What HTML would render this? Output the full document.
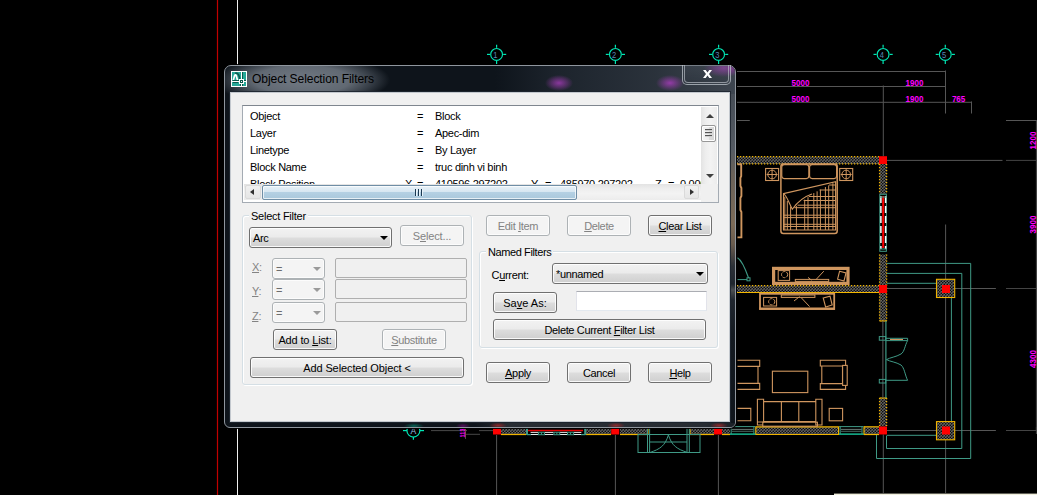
<!DOCTYPE html>
<html>
<head>
<meta charset="utf-8">
<title>Object Selection Filters</title>
<style>
html,body{margin:0;padding:0;background:#000;}
body{width:1037px;height:495px;position:relative;overflow:hidden;font-family:"Liberation Sans",sans-serif;font-size:11px;color:#000;}
#cad{position:absolute;left:0;top:0;width:1037px;height:495px;}
#dlg{position:absolute;left:224px;top:65px;width:512px;height:363px;border-radius:7px 7px 6px 6px;background:#0e141b;box-sizing:border-box;border:1px solid #8f969e;box-shadow:0 0 0 1px rgba(0,0,0,.9);overflow:hidden;}
#glass{position:absolute;left:0;top:0;width:510px;height:361px;background-repeat:no-repeat;
background-image:
 radial-gradient(ellipse 14px 8px at 334px 17px, rgba(165,60,185,.8), rgba(160,60,180,.35) 60%, rgba(160,60,180,0) 100%),
 radial-gradient(ellipse 14px 8px at 445px 17px, rgba(165,60,185,.85), rgba(160,60,180,.35) 60%, rgba(160,60,180,0) 100%),
 radial-gradient(ellipse 20px 9px at 499px 2px, rgba(165,70,185,.9), rgba(160,60,180,.4) 60%, rgba(160,60,180,0) 100%),
 radial-gradient(ellipse 88px 26px at 77px 14px, rgba(116,124,134,.97) 0%, rgba(106,114,124,.9) 55%, rgba(80,88,98,.6) 80%, rgba(40,48,58,0) 100%),
 linear-gradient(90deg, rgba(0,0,0,0) 270px, rgba(40,48,58,.55) 330px, rgba(52,60,70,.75) 430px, rgba(64,72,82,.95) 510px),
 linear-gradient(180deg, #464d56 0, #555b63 55px, #6a6259 80px, #7c6b58 130px, #6a5c4e 150px, #2c3138 172px, #20262e 190px, #4c4f52 196px, #20262e 206px, #141a21 240px, #0f151c 100%);
background-size:510px 28px,510px 28px,510px 28px,510px 28px,510px 28px,7px 333px;
background-position:0 0,0 0,0 0,0 0,0 0,503px 28px;
}
#client{position:absolute;left:231px;top:93px;width:498px;height:328px;background:#f0f0f0;box-shadow:0 0 0 1px #c3c8ce, 0 0 0 2px rgba(30,38,48,.9);}
.abs{position:absolute;white-space:nowrap;}
.t{position:absolute;white-space:nowrap;line-height:13px;height:13px;letter-spacing:-0.3px;}
u{text-decoration:underline;text-underline-offset:1px;}
.btn{position:absolute;box-sizing:border-box;height:21px;border:1px solid #707070;border-radius:3px;
 background:linear-gradient(#f2f2f2 0%,#ebebeb 48%,#dddddd 52%,#cfcfcf 100%);box-shadow:inset 0 0 0 1px rgba(255,255,255,.85);
 text-align:center;line-height:19px;padding-top:1px;white-space:nowrap;letter-spacing:-0.35px;}
.btn.dis{border-color:#adb2b5;background:#f4f4f4;color:#838383;box-shadow:inset 0 0 0 1px #fcfcfc;}
.grp{position:absolute;box-sizing:border-box;border:1px solid #d5dfe5;border-radius:3px;box-shadow:inset 1px 1px 0 #fff, 1px 1px 0 #fff;}
.grp>span{position:absolute;top:-7px;left:6px;background:#f0f0f0;padding:0 2px;line-height:13px;letter-spacing:-0.4px;}
.edit{position:absolute;box-sizing:border-box;height:20px;border:1px solid #afafaf;border-radius:2px;background:#f0f0f0;}
.cmbd{position:absolute;box-sizing:border-box;height:21px;width:53px;border:1px solid #adb2b5;border-radius:3px;background:#f4f4f4;box-shadow:inset 0 0 0 1px #fcfcfc;color:#6d6d6d;}
.arr{position:absolute;width:0;height:0;border-left:4px solid transparent;border-right:4px solid transparent;border-top:4px solid #000;}
</style>
</head>
<body>
<svg id="cad" width="1037" height="495" viewBox="0 0 1037 495">
<!--CAD-->
<defs>
<pattern id="hat" width="3" height="3" patternUnits="userSpaceOnUse"><rect width="3" height="3" fill="#646464"/><circle cx="0.75" cy="0.75" r="0.82" fill="#0c0c0c"/><circle cx="2.25" cy="2.25" r="0.82" fill="#0c0c0c"/></pattern>
</defs>
<rect x="217" y="0" width="1" height="495" fill="#f00000"/><rect x="216.7" y="0" width="1.6" height="495" fill="#900000" opacity=".5"/>
<line x1="237.5" y1="0" x2="237.5" y2="65" stroke="#f0f0f0" stroke-width="1" />
<line x1="237.5" y1="428" x2="237.5" y2="495" stroke="#f0f0f0" stroke-width="1" />
<circle cx="496.6" cy="54.4" r="5.9" fill="none" stroke="#00e6b4" stroke-width="1.15"/>
<line x1="487.0" y1="54.4" x2="490.0" y2="54.4" stroke="#00e6b4" stroke-width="1.2" />
<line x1="503.20000000000005" y1="54.4" x2="506.20000000000005" y2="54.4" stroke="#00e6b4" stroke-width="1.2" />
<line x1="496.6" y1="44.8" x2="496.6" y2="47.8" stroke="#00e6b4" stroke-width="1.2" />
<line x1="496.6" y1="61.0" x2="496.6" y2="64.0" stroke="#00e6b4" stroke-width="1.2" />
<text x="495.3" y="58.0" font-family="Liberation Sans, sans-serif" font-size="9.8" fill="#5a88b8" text-anchor="middle" textLength="4.2" lengthAdjust="spacingAndGlyphs">1</text>
<circle cx="615.4" cy="54.4" r="5.9" fill="none" stroke="#00e6b4" stroke-width="1.15"/>
<line x1="605.8" y1="54.4" x2="608.8" y2="54.4" stroke="#00e6b4" stroke-width="1.2" />
<line x1="622.0" y1="54.4" x2="625.0" y2="54.4" stroke="#00e6b4" stroke-width="1.2" />
<line x1="615.4" y1="44.8" x2="615.4" y2="47.8" stroke="#00e6b4" stroke-width="1.2" />
<line x1="615.4" y1="61.0" x2="615.4" y2="64.0" stroke="#00e6b4" stroke-width="1.2" />
<text x="614.1" y="58.0" font-family="Liberation Sans, sans-serif" font-size="9.8" fill="#5a88b8" text-anchor="middle" textLength="4.2" lengthAdjust="spacingAndGlyphs">2</text>
<circle cx="718.6" cy="54.4" r="5.9" fill="none" stroke="#00e6b4" stroke-width="1.15"/>
<line x1="709.0" y1="54.4" x2="712.0" y2="54.4" stroke="#00e6b4" stroke-width="1.2" />
<line x1="725.2" y1="54.4" x2="728.2" y2="54.4" stroke="#00e6b4" stroke-width="1.2" />
<line x1="718.6" y1="44.8" x2="718.6" y2="47.8" stroke="#00e6b4" stroke-width="1.2" />
<line x1="718.6" y1="61.0" x2="718.6" y2="64.0" stroke="#00e6b4" stroke-width="1.2" />
<text x="717.3000000000001" y="58.0" font-family="Liberation Sans, sans-serif" font-size="9.8" fill="#5a88b8" text-anchor="middle" textLength="4.2" lengthAdjust="spacingAndGlyphs">3</text>
<circle cx="883.1" cy="54.4" r="5.9" fill="none" stroke="#00e6b4" stroke-width="1.15"/>
<line x1="873.5" y1="54.4" x2="876.5" y2="54.4" stroke="#00e6b4" stroke-width="1.2" />
<line x1="889.7" y1="54.4" x2="892.7" y2="54.4" stroke="#00e6b4" stroke-width="1.2" />
<line x1="883.1" y1="44.8" x2="883.1" y2="47.8" stroke="#00e6b4" stroke-width="1.2" />
<line x1="883.1" y1="61.0" x2="883.1" y2="64.0" stroke="#00e6b4" stroke-width="1.2" />
<text x="881.8000000000001" y="58.0" font-family="Liberation Sans, sans-serif" font-size="9.8" fill="#5a88b8" text-anchor="middle" textLength="4.2" lengthAdjust="spacingAndGlyphs">4</text>
<circle cx="945.3" cy="54.4" r="5.9" fill="none" stroke="#00e6b4" stroke-width="1.15"/>
<line x1="935.6999999999999" y1="54.4" x2="938.6999999999999" y2="54.4" stroke="#00e6b4" stroke-width="1.2" />
<line x1="951.9" y1="54.4" x2="954.9" y2="54.4" stroke="#00e6b4" stroke-width="1.2" />
<line x1="945.3" y1="44.8" x2="945.3" y2="47.8" stroke="#00e6b4" stroke-width="1.2" />
<line x1="945.3" y1="61.0" x2="945.3" y2="64.0" stroke="#00e6b4" stroke-width="1.2" />
<text x="944.0" y="58.0" font-family="Liberation Sans, sans-serif" font-size="9.8" fill="#5a88b8" text-anchor="middle" textLength="4.2" lengthAdjust="spacingAndGlyphs">5</text>
<line x1="737" y1="71.5" x2="945.8" y2="71.5" stroke="#565656" stroke-width="1" />
<line x1="737" y1="86.5" x2="945.8" y2="86.5" stroke="#565656" stroke-width="1" />
<line x1="737" y1="102.3" x2="972" y2="102.3" stroke="#565656" stroke-width="1" />
<line x1="945.5" y1="70.5" x2="945.5" y2="113.5" stroke="#565656" stroke-width="1" />
<line x1="971.5" y1="101.5" x2="971.5" y2="113.5" stroke="#565656" stroke-width="1" />
<line x1="883.3" y1="85.5" x2="883.3" y2="156" stroke="#565656" stroke-width="1" />
<text x="800.5" y="86" font-family="Liberation Sans, sans-serif" font-size="9.6" font-weight="bold" fill="#ff00ff" text-anchor="middle" textLength="17.8" lengthAdjust="spacingAndGlyphs">5000</text>
<text x="800.5" y="102" font-family="Liberation Sans, sans-serif" font-size="9.6" font-weight="bold" fill="#ff00ff" text-anchor="middle" textLength="17.8" lengthAdjust="spacingAndGlyphs">5000</text>
<text x="914.5" y="86" font-family="Liberation Sans, sans-serif" font-size="9.6" font-weight="bold" fill="#ff00ff" text-anchor="middle" textLength="17.8" lengthAdjust="spacingAndGlyphs">1900</text>
<text x="914.5" y="102" font-family="Liberation Sans, sans-serif" font-size="9.6" font-weight="bold" fill="#ff00ff" text-anchor="middle" textLength="17.8" lengthAdjust="spacingAndGlyphs">1900</text>
<text x="958.6" y="102" font-family="Liberation Sans, sans-serif" font-size="9.6" font-weight="bold" fill="#ff00ff" text-anchor="middle" textLength="13.350000000000001" lengthAdjust="spacingAndGlyphs">765</text>
<line x1="737" y1="120.5" x2="749.8" y2="120.5" stroke="#565656" stroke-width="1" />
<line x1="1006" y1="120.5" x2="1037" y2="120.5" stroke="#565656" stroke-width="1" />
<line x1="1036.4" y1="120" x2="1036.4" y2="431" stroke="#4a4a4a" stroke-width="1" />
<line x1="887" y1="160.4" x2="1002.5" y2="160.4" stroke="#565656" stroke-width="1" />
<line x1="1006" y1="160.4" x2="1037" y2="160.4" stroke="#444" stroke-width="1" />
<line x1="887" y1="288.5" x2="995.9" y2="288.5" stroke="#565656" stroke-width="1" />
<line x1="1006" y1="288.5" x2="1037" y2="288.5" stroke="#444" stroke-width="1" />
<line x1="887" y1="430.5" x2="995.9" y2="430.5" stroke="#565656" stroke-width="1" />
<line x1="1006" y1="430.5" x2="1037" y2="430.5" stroke="#444" stroke-width="1" />
<line x1="1036.4" y1="427" x2="1036.4" y2="434" stroke="#4a4a4a" stroke-width="1" />
<text transform="translate(1036,140.5) rotate(-90)" font-family="Liberation Sans, sans-serif" font-size="9.6" font-weight="bold" fill="#ff00ff" text-anchor="middle" textLength="17.8" lengthAdjust="spacingAndGlyphs">1200</text>
<text transform="translate(1036,224.5) rotate(-90)" font-family="Liberation Sans, sans-serif" font-size="9.6" font-weight="bold" fill="#ff00ff" text-anchor="middle" textLength="17.8" lengthAdjust="spacingAndGlyphs">3900</text>
<text transform="translate(1036,359) rotate(-90)" font-family="Liberation Sans, sans-serif" font-size="9.6" font-weight="bold" fill="#ff00ff" text-anchor="middle" textLength="17.8" lengthAdjust="spacingAndGlyphs">4300</text>
<line x1="945.6" y1="224.5" x2="945.6" y2="493" stroke="#565656" stroke-width="1" />
<line x1="883.3" y1="434.5" x2="883.3" y2="493" stroke="#565656" stroke-width="1" />
<rect x="737" y="156.5" width="142" height="7.5" fill="url(#hat)"/>
<line x1="737" y1="156.6" x2="879" y2="156.6" stroke="#f0b400" stroke-width="1.3" stroke-dasharray="1.3 1.7"/>
<line x1="737" y1="163.8" x2="879" y2="163.8" stroke="#f0b400" stroke-width="1.3" stroke-dasharray="1.3 1.7"/>
<rect x="879" y="156.2" width="8" height="8" fill="#ff0000"/>
<rect x="879.5" y="164" width="7" height="30" fill="url(#hat)"/>
<line x1="879.6" y1="164" x2="879.6" y2="194" stroke="#f0b400" stroke-width="1.3" stroke-dasharray="1.3 1.7"/>
<line x1="886.6" y1="164" x2="886.6" y2="194" stroke="#f0b400" stroke-width="1.3" stroke-dasharray="1.3 1.7"/>
<rect x="879.8" y="194.3" width="6.6" height="57" fill="none" stroke="#3f9a86" stroke-width="1" />
<line x1="883.2" y1="196" x2="883.2" y2="248" stroke="#ff0000" stroke-width="2" />
<line x1="880.9" y1="196" x2="880.9" y2="249" stroke="#ffffff" stroke-width="1.5" stroke-dasharray="7 3"/>
<line x1="885.6" y1="196" x2="885.6" y2="249" stroke="#ffffff" stroke-width="1.5" stroke-dasharray="7 3"/>
<line x1="879.8" y1="197" x2="886.4" y2="197" stroke="#3f9a86" stroke-width="1" />
<line x1="879.8" y1="249" x2="886.4" y2="249" stroke="#3f9a86" stroke-width="1" />
<rect x="879.5" y="254.5" width="7" height="66.5" fill="url(#hat)"/>
<line x1="879.6" y1="254.5" x2="879.6" y2="321" stroke="#f0b400" stroke-width="1.3" stroke-dasharray="1.3 1.7"/>
<line x1="886.6" y1="254.5" x2="886.6" y2="321" stroke="#f0b400" stroke-width="1.3" stroke-dasharray="1.3 1.7"/>
<line x1="879.5" y1="321" x2="887" y2="321" stroke="#f0b400" stroke-width="1.2" />
<rect x="737" y="285.5" width="142" height="7" fill="url(#hat)"/>
<line x1="737" y1="285.6" x2="879" y2="285.6" stroke="#f0b400" stroke-width="1.3" stroke-dasharray="1.3 1.7"/>
<line x1="737" y1="292.5" x2="879" y2="292.5" stroke="#f5b800" stroke-width="1.2" />
<rect x="879" y="285" width="8" height="8" fill="#ff0000"/>
<rect x="879.5" y="398" width="7" height="28.5" fill="url(#hat)"/>
<line x1="879.6" y1="398" x2="879.6" y2="426" stroke="#f0b400" stroke-width="1.3" stroke-dasharray="1.3 1.7"/>
<line x1="886.6" y1="398" x2="886.6" y2="426" stroke="#f0b400" stroke-width="1.3" stroke-dasharray="1.3 1.7"/>
<line x1="879.5" y1="398" x2="887" y2="398" stroke="#f0b400" stroke-width="1.2" />
<rect x="501" y="427" width="25" height="7.5" fill="url(#hat)"/>
<line x1="501" y1="434.5" x2="526" y2="434.5" stroke="#f0b400" stroke-width="1.2" />
<rect x="586" y="427" width="25" height="7.5" fill="url(#hat)"/>
<line x1="586" y1="434.5" x2="611" y2="434.5" stroke="#f0b400" stroke-width="1.2" />
<rect x="620" y="427" width="28" height="7.5" fill="url(#hat)"/>
<line x1="620" y1="434.5" x2="648" y2="434.5" stroke="#f0b400" stroke-width="1.2" />
<rect x="690" y="427" width="24" height="7.5" fill="url(#hat)"/>
<line x1="690" y1="434.5" x2="714" y2="434.5" stroke="#f0b400" stroke-width="1.2" />
<rect x="722" y="427" width="8" height="7.5" fill="url(#hat)"/>
<line x1="722" y1="434.5" x2="730" y2="434.5" stroke="#f0b400" stroke-width="1.2" />
<rect x="755.8" y="427" width="82.80000000000007" height="7.5" fill="url(#hat)"/>
<line x1="755.8" y1="434.5" x2="838.6" y2="434.5" stroke="#f0b400" stroke-width="1.2" />
<line x1="755.8" y1="426.8" x2="838.6" y2="426.8" stroke="#f0b400" stroke-width="1.2" />
<rect x="864" y="427" width="15" height="7.5" fill="url(#hat)"/>
<line x1="864" y1="434.5" x2="879" y2="434.5" stroke="#f0b400" stroke-width="1.2" />
<line x1="864" y1="426.8" x2="879" y2="426.8" stroke="#f0b400" stroke-width="1.2" />
<line x1="755.8" y1="426.5" x2="755.8" y2="435" stroke="#f0b400" stroke-width="1.2" />
<line x1="838.6" y1="426.5" x2="838.6" y2="435" stroke="#f0b400" stroke-width="1.2" />
<line x1="864" y1="426.5" x2="864" y2="435" stroke="#f0b400" stroke-width="1.2" />
<line x1="648" y1="427" x2="648" y2="435" stroke="#f0b400" stroke-width="1.2" />
<line x1="690" y1="427" x2="690" y2="435" stroke="#f0b400" stroke-width="1.2" />
<rect x="493" y="426.5" width="8" height="8" fill="#ff0000"/>
<rect x="611.2" y="426.5" width="8" height="8" fill="#ff0000"/>
<rect x="714" y="426.5" width="8" height="8" fill="#ff0000"/>
<rect x="879" y="426.5" width="8" height="8" fill="#ff0000"/>
<line x1="496.6" y1="435" x2="496.6" y2="495" stroke="#565656" stroke-width="1" />
<line x1="615.4" y1="435" x2="615.4" y2="495" stroke="#565656" stroke-width="1" />
<line x1="718.4" y1="435" x2="718.4" y2="495" stroke="#565656" stroke-width="1" />
<line x1="527" y1="427" x2="527" y2="435" stroke="#3f9a86" stroke-width="2" />
<line x1="585.2" y1="427" x2="585.2" y2="435" stroke="#3f9a86" stroke-width="2" />
<line x1="528" y1="430.6" x2="583" y2="430.6" stroke="#e60000" stroke-width="1.5" />
<line x1="530.6" y1="432.4" x2="538" y2="432.4" stroke="#e8e8e8" stroke-width="1" />
<line x1="530.6" y1="434.5" x2="538" y2="434.5" stroke="#e8e8e8" stroke-width="1" />
<line x1="545" y1="432.4" x2="553.5" y2="432.4" stroke="#e8e8e8" stroke-width="1" />
<line x1="545" y1="434.5" x2="553.5" y2="434.5" stroke="#e8e8e8" stroke-width="1" />
<line x1="559.7" y1="432.4" x2="567" y2="432.4" stroke="#e8e8e8" stroke-width="1" />
<line x1="559.7" y1="434.5" x2="567" y2="434.5" stroke="#e8e8e8" stroke-width="1" />
<line x1="574" y1="432.4" x2="581.4" y2="432.4" stroke="#e8e8e8" stroke-width="1" />
<line x1="574" y1="434.5" x2="581.4" y2="434.5" stroke="#e8e8e8" stroke-width="1" />
<rect x="538.4" y="432.3" width="6.100000000000023" height="2.4" fill="none" stroke="#3f9a86" stroke-width="1" />
<line x1="541.45" y1="432.3" x2="541.45" y2="434.7" stroke="#3f9a86" stroke-width="1" />
<rect x="554" y="432.3" width="5.7000000000000455" height="2.4" fill="none" stroke="#3f9a86" stroke-width="1" />
<line x1="556.85" y1="432.3" x2="556.85" y2="434.7" stroke="#3f9a86" stroke-width="1" />
<rect x="567.5" y="432.3" width="6.100000000000023" height="2.4" fill="none" stroke="#3f9a86" stroke-width="1" />
<line x1="570.55" y1="432.3" x2="570.55" y2="434.7" stroke="#3f9a86" stroke-width="1" />
<line x1="527" y1="434.6" x2="531" y2="434.6" stroke="#3f9a86" stroke-width="1.2" />
<line x1="581" y1="434.6" x2="585.5" y2="434.6" stroke="#3f9a86" stroke-width="1.2" />
<line x1="730" y1="426.6" x2="755.5" y2="426.6" stroke="#3f9a86" stroke-width="1" />
<line x1="732" y1="429.4" x2="753.5" y2="429.4" stroke="#6a7a76" stroke-width="1" />
<line x1="732" y1="431.3" x2="753.5" y2="431.3" stroke="#4a6a62" stroke-width="1" />
<line x1="730" y1="434.1" x2="755.5" y2="434.1" stroke="#19d6a8" stroke-width="1.3" />
<line x1="731.2" y1="426.6" x2="731.2" y2="434" stroke="#3f9a86" stroke-width="1" />
<line x1="753.9" y1="426.6" x2="753.9" y2="434" stroke="#3f9a86" stroke-width="1" />
<line x1="839" y1="426.6" x2="863.6" y2="426.6" stroke="#3f9a86" stroke-width="1" />
<line x1="841" y1="429.4" x2="861.6" y2="429.4" stroke="#6a7a76" stroke-width="1" />
<line x1="841" y1="431.3" x2="861.6" y2="431.3" stroke="#4a6a62" stroke-width="1" />
<line x1="839" y1="434.1" x2="863.6" y2="434.1" stroke="#19d6a8" stroke-width="1.3" />
<line x1="840.2" y1="426.6" x2="840.2" y2="434" stroke="#3f9a86" stroke-width="1" />
<line x1="862.0" y1="426.6" x2="862.0" y2="434" stroke="#3f9a86" stroke-width="1" />
<rect x="638" y="434.5" width="62" height="18" fill="none" stroke="#3f9a86" stroke-width="1" />
<line x1="647.5" y1="428" x2="647.5" y2="453" stroke="#3f9a86" stroke-width="1" />
<line x1="649.6" y1="428" x2="649.6" y2="453" stroke="#3f9a86" stroke-width="1" />
<line x1="687" y1="428" x2="687" y2="453" stroke="#3f9a86" stroke-width="1" />
<line x1="689.3" y1="428" x2="689.3" y2="453" stroke="#3f9a86" stroke-width="1" />
<line x1="649.6" y1="442" x2="687" y2="442" stroke="#3f9a86" stroke-width="1" />
<path d="M650 452.5 C660 449 665 446 668.4 435 C672 446 677 449 687.5 452.5" fill="none" stroke="#3f9a86" stroke-width="1"/>
<circle cx="413.4" cy="430.6" r="6.5" fill="none" stroke="#00e6b4" stroke-width="1.2"/>
<line x1="403" y1="430.6" x2="407" y2="430.6" stroke="#00e6b4" stroke-width="1.2" />
<line x1="420" y1="430.6" x2="424" y2="430.6" stroke="#00e6b4" stroke-width="1.2" />
<line x1="413.4" y1="437" x2="413.4" y2="439.8" stroke="#00e6b4" stroke-width="1.2" />
<text x="413.4" y="434" font-family="Liberation Sans, sans-serif" font-size="8.5" fill="#9cc0e8" text-anchor="middle">A</text>
<line x1="431" y1="430.6" x2="467" y2="430.6" stroke="#484848" stroke-width="1" />
<line x1="479" y1="430.6" x2="493" y2="430.6" stroke="#484848" stroke-width="1" />
<line x1="464.6" y1="434.3" x2="480" y2="434.3" stroke="#484848" stroke-width="1" />
<line x1="465.5" y1="429" x2="465.5" y2="439" stroke="#484848" stroke-width="1" />
<text transform="translate(465,437.5) rotate(-90)" font-family="Liberation Sans, sans-serif" font-size="7" font-weight="bold" fill="#ff00ff" textLength="9" lengthAdjust="spacingAndGlyphs">113</text>
<path d="M887 263.4 H970.7 V458.5 H876.5 V435" fill="none" stroke="#3f9a86" stroke-width="1"/>
<path d="M887 273.4 H961.8 V448.5 H886.5 V435.5" fill="none" stroke="#3f9a86" stroke-width="1"/>
<line x1="887" y1="283.3" x2="936.5" y2="283.3" stroke="#3f9a86" stroke-width="1" />
<line x1="951.4" y1="297.7" x2="951.4" y2="421" stroke="#3f9a86" stroke-width="1" />
<line x1="887" y1="435.3" x2="936" y2="435.3" stroke="#3f9a86" stroke-width="1" />
<rect x="936.5" y="279.3" width="18" height="18" fill="url(#hat)"/>
<rect x="936.5" y="279.3" width="18.2" height="18.2" fill="none" stroke="#f0b400" stroke-width="1.1" />
<rect x="936.5" y="421.6" width="18" height="18" fill="url(#hat)"/>
<rect x="936.5" y="421.6" width="18.2" height="18.2" fill="none" stroke="#f0b400" stroke-width="1.1" />
<rect x="942" y="285" width="8" height="8" fill="#ff0000"/>
<rect x="942" y="426.5" width="8" height="8" fill="#ff0000"/>
<line x1="885.9" y1="321" x2="885.9" y2="398" stroke="#3f9a86" stroke-width="1.2" />
<line x1="882.9" y1="321" x2="882.9" y2="398" stroke="#5c5c5c" stroke-width="1" />
<rect x="879.3" y="336.6" width="6.4" height="3.6" fill="none" stroke="#3f9a86" stroke-width="1" />
<rect x="879.3" y="379.4" width="6.4" height="3.6" fill="none" stroke="#3f9a86" stroke-width="1" />
<path d="M886 338.3 H907.6 V340.6 H886" fill="none" stroke="#3f9a86" stroke-width="1"/>
<line x1="890" y1="339.5" x2="903" y2="339.5" stroke="#cf965f" stroke-width="1" />
<path d="M907.6 340.6 C905 345 904.5 352 901 354 C896 357 890 357.5 886.5 359.6 C890 361.6 896 362 901 365 C904.5 368 905 375 907.6 380.3 H886" fill="none" stroke="#3f9a86" stroke-width="1"/>
<path d="M737.5 164.4 H741.2 V176 L740.4 178 V186 L741.4 188 V196 L740.4 198 V210 L741.4 212 V237.4 H737.5" fill="none" stroke="#cf965f" stroke-width="1.9"/>
<rect x="780.9" y="164" width="56.3" height="69.4" fill="none" stroke="#cf965f" stroke-width="1.5" rx="2.5"/>
<rect x="781.8" y="164.6" width="27" height="14" fill="none" stroke="#cf965f" stroke-width="1.1" rx="2.5"/>
<rect x="809.6" y="164.6" width="27" height="14" fill="none" stroke="#cf965f" stroke-width="1.1" rx="2.5"/>
<rect x="765.6" y="168.5" width="13" height="12" fill="none" stroke="#cf965f" stroke-width="1.1" />
<circle cx="772.1" cy="174.5" r="4.3" fill="none" stroke="#cf965f" stroke-width="1"/>
<line x1="766.6" y1="174.5" x2="777.6" y2="174.5" stroke="#cf965f" stroke-width="1" />
<line x1="772.1" y1="169.3" x2="772.1" y2="179.7" stroke="#cf965f" stroke-width="1" />
<rect x="839.7" y="168.5" width="13" height="12" fill="none" stroke="#cf965f" stroke-width="1.1" />
<circle cx="846.2" cy="174.5" r="4.3" fill="none" stroke="#cf965f" stroke-width="1"/>
<line x1="840.7" y1="174.5" x2="851.7" y2="174.5" stroke="#cf965f" stroke-width="1" />
<line x1="846.2" y1="169.3" x2="846.2" y2="179.7" stroke="#cf965f" stroke-width="1" />
<path d="M783.5 193.6 L835.6 181.6 V230 H783.5 Z" fill="none" stroke="#cf965f" stroke-width="1.1"/>
<path d="M783.5 193.6 C787 196 789 203 792.3 209.2 C796 204 803 197 812 194" fill="none" stroke="#cf965f" stroke-width="1.1"/>
<line x1="784.8" y1="196.70999999999992" x2="784.8" y2="230" stroke="#cf965f" stroke-width="1" />
<line x1="787.3" y1="200.95999999999992" x2="787.3" y2="230" stroke="#cf965f" stroke-width="1" />
<line x1="790.6" y1="206.57000000000005" x2="790.6" y2="230" stroke="#cf965f" stroke-width="1" />
<line x1="796.4" y1="206.04299999999998" x2="796.4" y2="230" stroke="#cf965f" stroke-width="1" />
<line x1="804.7" y1="199.65199999999993" x2="804.7" y2="230" stroke="#cf965f" stroke-width="1" />
<line x1="808" y1="197.11099999999996" x2="808" y2="230" stroke="#cf965f" stroke-width="1" />
<line x1="813.8" y1="193.06400000000002" x2="813.8" y2="230" stroke="#cf965f" stroke-width="1" />
<line x1="817.1" y1="191.34799999999998" x2="817.1" y2="230" stroke="#cf965f" stroke-width="1" />
<line x1="820.4" y1="189.632" x2="820.4" y2="230" stroke="#cf965f" stroke-width="1" />
<line x1="825.4" y1="187.032" x2="825.4" y2="230" stroke="#cf965f" stroke-width="1" />
<line x1="828.7" y1="185.31599999999997" x2="828.7" y2="230" stroke="#cf965f" stroke-width="1" />
<line x1="832.9" y1="183.132" x2="832.9" y2="230" stroke="#cf965f" stroke-width="1" />
<line x1="829.1" y1="185" x2="835.6" y2="185" stroke="#cf965f" stroke-width="1" />
<line x1="819.6" y1="190" x2="835.6" y2="190" stroke="#cf965f" stroke-width="1" />
<line x1="808.81" y1="196.5" x2="835.6" y2="196.5" stroke="#cf965f" stroke-width="1" />
<line x1="803.6099999999999" y1="200.5" x2="835.6" y2="200.5" stroke="#cf965f" stroke-width="1" />
<line x1="797.5" y1="205.2" x2="835.6" y2="205.2" stroke="#cf965f" stroke-width="1" />
<line x1="794.25" y1="207.7" x2="835.6" y2="207.7" stroke="#cf965f" stroke-width="1" />
<line x1="783.5" y1="215.2" x2="835.6" y2="215.2" stroke="#cf965f" stroke-width="1" />
<line x1="783.5" y1="217.6" x2="835.6" y2="217.6" stroke="#cf965f" stroke-width="1" />
<line x1="783.5" y1="224.3" x2="835.6" y2="224.3" stroke="#cf965f" stroke-width="1" />
<line x1="783.5" y1="226.5" x2="835.6" y2="226.5" stroke="#cf965f" stroke-width="1" />
<path d="M737.5 257.8 C740.5 259.5 745 268 748.6 278" fill="none" stroke="#3f9a86" stroke-width="1.1"/>
<line x1="737.5" y1="279.6" x2="747" y2="279.6" stroke="#3f9a86" stroke-width="1" />
<rect x="747" y="277.8" width="3" height="3" fill="none" stroke="#3f9a86" stroke-width="1" />
<rect x="773.6" y="268.4" width="74.4" height="15" fill="none" stroke="#cf965f" stroke-width="3.2" />
<line x1="773" y1="283.6" x2="848.6" y2="283.6" stroke="#cf965f" stroke-width="2.6" />
<rect x="778.2" y="270.6" width="11.4" height="9.8" fill="none" stroke="#cf965f" stroke-width="1" />
<circle cx="784.6" cy="274.6" r="3.1" fill="none" stroke="#cf965f" stroke-width="1" stroke-dasharray="3 1"/>
<rect x="795.3" y="279.4" width="33.4" height="2" fill="none" stroke="#cf965f" stroke-width="1" />
<path d="M808 277.4 L811.5 280.2 M815.6 280 L823.8 271.2" fill="none" stroke="#cf965f" stroke-width="1"/>
<path d="M839.6 271.2 L846 273 L844 281 L837.6 279.2 Z" fill="none" stroke="#cf965f" stroke-width="1.1"/>
<rect x="760" y="293.8" width="74.2" height="15.2" fill="none" stroke="#cf965f" stroke-width="1.8" />
<line x1="759.3" y1="308.6" x2="835" y2="308.6" stroke="#cf965f" stroke-width="2.4" />
<rect x="763.6" y="297.4" width="13" height="8.6" fill="none" stroke="#cf965f" stroke-width="1" />
<circle cx="771.7" cy="301.7" r="3.1" fill="none" stroke="#cf965f" stroke-width="1" stroke-dasharray="3 1"/>
<rect x="781.3" y="295" width="33.6" height="2.4" fill="none" stroke="#cf965f" stroke-width="1" />
<path d="M794 301 L799.6 296.6 M801.5 298 L809.6 306.6" fill="none" stroke="#cf965f" stroke-width="1"/>
<path d="M823.2 298 L830 296.2 L832.2 305 L825.6 307 Z" fill="none" stroke="#cf965f" stroke-width="1.1"/>
<path d="M737.5 360.2 H759.7 V366.4 H737.5 M737.5 383.4 H759.7 V389.4 H737.5 M758 366.4 V383.4" fill="none" stroke="#cf965f" stroke-width="1.1"/>
<rect x="772.4" y="371.2" width="35.4" height="21.4" fill="none" stroke="#cf965f" stroke-width="1.1" />
<path d="M820.3 360.2 H845.6 V366 H820.3 Z M820.3 383.6 H845.6 V389.4 H820.3 Z M821.8 366 V383.6 M842.5 366 V383.6" fill="none" stroke="#cf965f" stroke-width="1.1"/>
<rect x="842.6" y="365.4" width="4.6" height="20" fill="#000" stroke="#cf965f" stroke-width="1.1" />
<path d="M757.4 399.3 H763.6 V422 H757.4 Z M815.8 399.3 H822 V425 H815.8 Z M757.4 422 V425 H763 M763.6 401.6 H815.8 M781.4 401.6 V421.5 M798.8 401.6 V421.5 M763.6 421.5 H815.8" fill="none" stroke="#cf965f" stroke-width="1.1"/>
<rect x="762.8" y="422.2" width="54.6" height="4" fill="none" stroke="#cf965f" stroke-width="1.1" />
<path d="M737.5 408.4 H750.8 V420.8 H737.5" fill="none" stroke="#cf965f" stroke-width="1.1"/>
<rect x="829.2" y="408.4" width="13.4" height="12.4" fill="none" stroke="#cf965f" stroke-width="1.1" />
<rect x="834" y="493.6" width="203" height="1.4" fill="#efeedc"/>
<!--/CAD-->
</svg>

<div id="dlg"><div id="glass"></div><div style="position:absolute;left:0;top:357px;width:510px;height:5px;background:
 radial-gradient(ellipse 9px 3px at 273px 2.5px, rgba(210,40,40,.6), rgba(200,40,40,0) 100%),
 radial-gradient(ellipse 9px 3px at 391px 2.5px, rgba(210,40,40,.6), rgba(200,40,40,0) 100%),
 radial-gradient(ellipse 9px 3px at 494px 2.5px, rgba(210,40,40,.6), rgba(200,40,40,0) 100%),
 radial-gradient(ellipse 10px 3px at 189px 3px, rgba(0,200,160,.45), rgba(0,200,160,0) 100%),
 radial-gradient(ellipse 7px 3px at 238px 3px, rgba(220,0,220,.35), rgba(220,0,220,0) 100%),
 linear-gradient(90deg, rgba(70,74,80,0) 250px, rgba(70,74,80,.45) 285px, rgba(70,74,80,.45) 480px, rgba(70,74,80,.2) 510px);"></div></div>
<!-- title -->
<div class="abs" style="left:252px;top:71px;font-size:12.1px;line-height:16px;color:#000;letter-spacing:-0.1px;">Object Selection Filters</div>
<svg class="abs" style="left:231px;top:71px;" width="16" height="16" viewBox="0 0 16 16">
<rect x="0" y="0" width="16" height="16" fill="#fff"/>
<rect x="1" y="1" width="14" height="14" fill="#27a898"/>
<path d="M4.2 2.2 C7.5 1.5 8.6 5 8.8 9" fill="none" stroke="#0d5a4e" stroke-width="1.6"/>
<path d="M2.2 9.5 L3.6 4.6 Q4.4 3.2 5.2 4.6 L6.6 9.5" fill="none" stroke="#fff" stroke-width="1.7"/>
<rect x="1.5" y="9" width="6.5" height="1" fill="#0d5a4e"/>
<rect x="1" y="10" width="14" height="1" fill="#fff"/>
<rect x="10" y="1" width="1" height="14" fill="#fff"/>
<rect x="11" y="1" width="1" height="7" fill="#0d5a4e"/>
<rect x="11" y="12" width="1" height="3" fill="#0d5a4e"/>
<rect x="9" y="12" width="1" height="3" fill="#0d5a4e"/>
<rect x="2" y="11" width="5" height="1" fill="#0d5a4e"/>
<rect x="13" y="9" width="2" height="1" fill="#0d5a4e"/>
<rect x="8" y="8" width="5" height="5" fill="#fff"/>
<rect x="9" y="9" width="3" height="3" fill="#0d5a4e"/>
<rect x="10" y="10" width="1" height="1" fill="#fff"/>
</svg>
<div class="abs" style="left:682px;top:65px;width:49px;height:20px;box-sizing:border-box;border:1px solid rgba(190,196,203,.75);border-top:none;border-radius:0 0 5px 5px;"></div>
<div class="abs" style="left:684px;top:65px;width:45px;height:18px;box-sizing:border-box;border:1px solid rgba(200,206,212,.6);border-top:none;border-radius:0 0 4px 4px;background:linear-gradient(rgba(70,78,88,.35),rgba(40,48,58,.25));"></div>
<svg class="abs" style="left:702px;top:69px;" width="11" height="10" viewBox="0 0 11 10"><path d="M1 1 H3.7 L5.5 3.4 L7.3 1 H10 L7 5 L10 9 H7.3 L5.5 6.6 L3.7 9 H1 L4 5 Z" fill="#fff"/></svg>
<div id="client">
<div style="position:absolute;left:-231px;top:-93px;width:1037px;height:495px;">
<!-- listbox -->
<div id="lb" style="position:absolute;left:242px;top:105px;width:477px;height:98px;box-sizing:border-box;background:#fff;border:1px solid #a4abb3;border-top-color:#7f868f;overflow:hidden;">
 <div style="position:absolute;left:-243px;top:-106px;width:1037px;height:495px;">
  <div class="t" style="left:250px;top:110px;">Object</div><div class="t" style="left:417px;top:110px;">=</div><div class="t" style="left:435px;top:110px;">Block</div>
  <div class="t" style="left:250px;top:127px;">Layer</div><div class="t" style="left:417px;top:127px;">=</div><div class="t" style="left:435px;top:127px;">Apec-dim</div>
  <div class="t" style="left:250px;top:144px;">Linetype</div><div class="t" style="left:417px;top:144px;">=</div><div class="t" style="left:435px;top:144px;">By Layer</div>
  <div class="t" style="left:250px;top:161px;">Block Name</div><div class="t" style="left:417px;top:161px;">=</div><div class="t" style="left:435px;top:161px;">truc dinh vi binh</div>
  <div class="t" style="left:250px;top:178px;">Block Position</div><div class="t" style="left:405px;top:178px;">X</div><div class="t" style="left:417px;top:178px;">=</div><div class="t" style="left:435px;top:178px;">410596.297202</div>
  <div class="t" style="left:531px;top:178px;">Y</div><div class="t" style="left:545px;top:178px;">=</div><div class="t" style="left:560px;top:178px;">485970.297202</div>
  <div class="t" style="left:655px;top:178px;">Z</div><div class="t" style="left:668px;top:178px;">=</div><div class="t" style="left:680px;top:178px;">0.0000</div>
  <!-- vertical scrollbar -->
  <div style="position:absolute;left:701px;top:107px;width:16px;height:77px;background:linear-gradient(90deg,#e3e3e3,#eeeeee 30%,#f3f3f3 60%,#ececec);"></div>
  <div style="position:absolute;left:706px;top:114px;width:0;height:0;border-left:4px solid transparent;border-right:4px solid transparent;border-bottom:4px solid #404040;"></div>
  <div style="position:absolute;left:706px;top:174px;width:0;height:0;border-left:4px solid transparent;border-right:4px solid transparent;border-top:4px solid #404040;"></div>
  <div style="position:absolute;left:701px;top:125px;width:15px;height:17px;box-sizing:border-box;border:1px solid #979797;border-radius:2px;background:linear-gradient(90deg,#f6f6f6,#ececec 50%,#dcdcdc 55%,#d6d6d6);box-shadow:inset 0 0 0 1px #fff;"></div>
  <div style="position:absolute;left:705px;top:129px;width:7px;height:1px;background:#555;box-shadow:0 3px 0 #555,0 6px 0 #555,0 1px 0 #cfcfcf,0 4px 0 #cfcfcf,0 7px 0 #cfcfcf;"></div>
  <!-- horizontal scrollbar -->
  <div style="position:absolute;left:244px;top:184px;width:457px;height:16px;background:linear-gradient(#e3e3e3,#eeeeee 30%,#f3f3f3 60%,#ececec);"></div>
  <div style="position:absolute;left:701px;top:184px;width:17px;height:18px;background:#f0f0f0;"></div>
  <div style="position:absolute;left:245px;top:185px;width:16px;height:14px;box-sizing:border-box;border:1px solid #dadada;border-radius:2px;background:linear-gradient(#f0f0f0,#e6e6e6);"></div>
  <div style="position:absolute;left:250px;top:188.5px;width:0;height:0;border-top:3.5px solid transparent;border-bottom:3.5px solid transparent;border-right:4px solid #303030;"></div>
  <div style="position:absolute;left:684px;top:185px;width:15px;height:14px;box-sizing:border-box;border:1px solid #dadada;border-radius:2px;background:linear-gradient(#f0f0f0,#e6e6e6);"></div>
  <div style="position:absolute;left:690px;top:188.5px;width:0;height:0;border-top:3.5px solid transparent;border-bottom:3.5px solid transparent;border-left:4px solid #303030;"></div>
  <div style="position:absolute;left:262px;top:185px;width:315px;height:15px;box-sizing:border-box;border:1px solid #6f8ea6;border-radius:2px;background:linear-gradient(#e9f2f8 0%,#d6e6f1 45%,#b4d0e3 50%,#a9c8dc 100%);box-shadow:inset 0 0 0 1px rgba(255,255,255,.7);"></div>
  <div style="position:absolute;left:415px;top:189px;width:1px;height:7px;background:#1c3a52;box-shadow:3px 0 0 #1c3a52,6px 0 0 #1c3a52,1px 0 0 #e8f3fa,4px 0 0 #e8f3fa,7px 0 0 #e8f3fa;"></div>
 </div>
</div>

<!-- Select Filter group -->
<div class="grp" style="left:242px;top:215px;width:230px;height:170px;"><span style="left:6px;top:-6px;letter-spacing:-0.25px;">Select Filter</span></div>
<div class="btn" style="left:249px;top:227px;width:143px;text-align:left;padding-left:3px;">Arc</div>
<div class="arr" style="left:380px;top:236px;"></div>
<div class="btn dis" style="left:400px;top:225px;width:64px;letter-spacing:-0.15px;">S<u>e</u>lect...</div>

<div class="t" style="left:252px;top:261px;color:#838383;"><u>X</u>:</div>
<div class="t" style="left:252px;top:285px;color:#838383;"><u>Y</u>:</div>
<div class="t" style="left:252px;top:310px;color:#838383;"><u>Z</u>:</div>
<div class="cmbd" style="left:272px;top:258px;"><span class="t" style="left:3px;top:4px;">=</span><div class="arr" style="left:40px;top:8px;border-top-color:#9a9a9a;"></div></div>
<div class="cmbd" style="left:272px;top:279px;"><span class="t" style="left:3px;top:4px;">=</span><div class="arr" style="left:40px;top:8px;border-top-color:#9a9a9a;"></div></div>
<div class="cmbd" style="left:272px;top:302px;"><span class="t" style="left:3px;top:4px;">=</span><div class="arr" style="left:40px;top:8px;border-top-color:#9a9a9a;"></div></div>
<div class="edit" style="left:335px;top:258px;width:132px;"></div>
<div class="edit" style="left:335px;top:279px;width:132px;"></div>
<div class="edit" style="left:335px;top:302px;width:132px;"></div>

<div class="btn" style="left:273px;top:329px;width:64px;letter-spacing:-0.15px;">Add to <u>L</u>ist:</div>
<div class="btn dis" style="left:382px;top:329px;width:64px;"><u>S</u>ubstitute</div>
<div class="btn" style="left:250px;top:357px;width:214px;letter-spacing:-0.1px;">Add Selected Object &lt;</div>

<!-- right side -->
<div class="btn dis" style="left:486px;top:215px;width:64px;">Edit <u>I</u>tem</div>
<div class="btn dis" style="left:567px;top:215px;width:64px;"><u>D</u>elete</div>
<div class="btn" style="left:648px;top:215px;width:64px;"><u>C</u>lear List</div>

<div class="grp" style="left:479px;top:251px;width:239px;height:97px;"><span style="left:6px;top:-6px;">Named Filters</span></div>
<div class="t" style="left:491.5px;top:269px;">C<u>u</u>rrent:</div>
<div class="btn" style="left:552px;top:263px;width:156px;text-align:left;padding-left:3px;">*unnamed</div>
<div class="arr" style="left:696px;top:272px;"></div>
<div class="btn" style="left:493px;top:292px;width:64px;letter-spacing:0;">Sa<u>v</u>e As:</div>
<div style="position:absolute;left:576px;top:291px;width:131px;height:20px;box-sizing:border-box;background:#fff;border:1px solid #e2e3ea;border-top-color:#abadb3;border-bottom-color:#e3e9ef;"></div>
<div class="btn" style="left:493px;top:319px;width:213px;">Delete Current <u>F</u>ilter List</div>

<div class="btn" style="left:486px;top:362px;width:64px;"><u>A</u>pply</div>
<div class="btn" style="left:567px;top:362px;width:64px;">Cancel</div>
<div class="btn" style="left:648px;top:362px;width:64px;"><u>H</u>elp</div>
</div>

</div>
</body>
</html>
